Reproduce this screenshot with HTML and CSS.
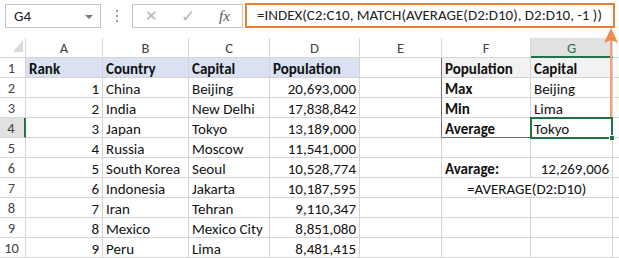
FILE: index.html
```html
<!DOCTYPE html>
<html>
<head>
<meta charset="utf-8">
<link rel="stylesheet" href="styles.css">
</head>
<body>
<div class="app">
  <div class="toolbar">
    <div class="namebox"><span>G4</span><span class="caret"></span></div>
    <div class="dots"><i></i><i></i><i></i></div>
    <div class="btns">
      <span class="btn x">✕</span>
      <span class="btn ok">✓</span>
      <span class="btn fx">fx</span>
    </div>
    <div class="formula">=INDEX(C2:C10, MATCH(AVERAGE(D2:D10), D2:D10, -1 ))</div>
  </div>
  <div class="sheet">
    <div class="ch corner"><span class="tri"></span></div>
    <div class="ch">A</div><div class="ch">B</div><div class="ch">C</div><div class="ch">D</div><div class="ch">E</div><div class="ch">F</div><div class="ch sel">G</div><div class="ch end"></div>

    <div class="rh">1</div>
    <div class="c blue b">Rank</div><div class="c blue b">Country</div><div class="c blue b">Capital</div><div class="c blue b">Population</div><div class="c tl"></div><div class="c gray b">Population</div><div class="c gray b">Capital</div><div class="c end"></div>

    <div class="rh">2</div>
    <div class="c r">1</div><div class="c">China</div><div class="c">Beijing</div><div class="c r">20,693,000</div><div class="c tl"></div><div class="c b">Max</div><div class="c">Beijing</div><div class="c end"></div>

    <div class="rh">3</div>
    <div class="c r">2</div><div class="c">India</div><div class="c">New Delhi</div><div class="c r">17,838,842</div><div class="c tl"></div><div class="c b">Min</div><div class="c">Lima</div><div class="c end"></div>

    <div class="rh selrow">4</div>
    <div class="c r">3</div><div class="c">Japan</div><div class="c">Tokyo</div><div class="c r">13,189,000</div><div class="c tl"></div><div class="c b tb">Average</div><div class="c active">Tokyo<span class="selbox"><span class="handle"></span></span></div><div class="c end"></div>

    <div class="rh">5</div>
    <div class="c r">4</div><div class="c">Russia</div><div class="c">Moscow</div><div class="c r">11,541,000</div><div class="c"></div><div class="c"></div><div class="c"></div><div class="c end"></div>

    <div class="rh">6</div>
    <div class="c r">5</div><div class="c">South Korea</div><div class="c">Seoul</div><div class="c r">10,528,774</div><div class="c"></div><div class="c b">Avarage:</div><div class="c r">12,269,006</div><div class="c end"></div>

    <div class="rh">7</div>
    <div class="c r">6</div><div class="c">Indonesia</div><div class="c">Jakarta</div><div class="c r">10,187,595</div><div class="c"></div><div class="c over">=AVERAGE(D2:D10)</div><div class="c"></div><div class="c end"></div>

    <div class="rh">8</div>
    <div class="c r">7</div><div class="c">Iran</div><div class="c">Tehran</div><div class="c r">9,110,347</div><div class="c"></div><div class="c"></div><div class="c"></div><div class="c end"></div>

    <div class="rh">9</div>
    <div class="c r">8</div><div class="c">Mexico</div><div class="c">Mexico City</div><div class="c r">8,851,080</div><div class="c"></div><div class="c"></div><div class="c"></div><div class="c end"></div>

    <div class="rh">10</div>
    <div class="c r">9</div><div class="c">Peru</div><div class="c">Lima</div><div class="c r">8,481,415</div><div class="c"></div><div class="c"></div><div class="c"></div><div class="c end"></div>
  </div>
  <svg class="arrow" width="20" height="95" viewBox="0 0 20 95">
    <line x1="11" y1="12" x2="11" y2="91" stroke="#F4A26F" stroke-width="2"/>
    <polygon points="11,2 4,17 11,14 18,17" fill="#F08A4B"/>
  </svg>
</div>
</body>
</html>
```
FILE: styles.css
```css
* { box-sizing: border-box; }
html, body { margin: 0; padding: 0; background: #fff; }
body { width: 619px; height: 258px; overflow: hidden; font-family: Carlito, Lato, "Liberation Sans", sans-serif; color: #000; }
.app { position: relative; width: 619px; height: 258px; }

.toolbar { height: 38px; display: flex; align-items: flex-start; padding: 3px 0 0 5px; }
.namebox { margin-top: 1px; width: 96px; height: 24px; border: 1px solid #c6c6c6; display: flex; align-items: center; justify-content: space-between; padding: 0 7px 0 8px; font-size: 15px; color: #222; }
.caret { width: 0; height: 0; border-left: 4px solid transparent; border-right: 4px solid transparent; border-top: 4px solid #777; margin-top: 1px; }
.dots { width: 31px; height: 24px; display: flex; flex-direction: column; align-items: center; justify-content: center; gap: 3px; margin-top: 1px; }
.dots i { display: block; width: 2px; height: 2px; background: #9a9a9a; }
.btns { margin-top: 1px; width: 111px; height: 24px; border: 1px solid #c6c6c6; display: flex; align-items: center; padding-left: 12px; }
.btn { font-size: 16px; color: #b5b5b5; }
.btn.x { width: 36px; font-size: 15px; }
.btn.ok { width: 36px; font-size: 17px; }
.btn.fx { font-family: "Liberation Serif", serif; font-style: italic; color: #555; font-size: 15px; margin-left: 2px; }
.formula { margin-left: 2px; width: 370px; height: 25px; border: 2px solid #ED7D31; padding: 0 0 0 10px; font-size: 15px; line-height: 21px; color: #222; white-space: nowrap; }

.sheet { display: grid; grid-template-columns: 26px 77px 86px 81px 90px 82px 89px 82px 6px; grid-template-rows: repeat(11, 20px); font-size: 15px; }
.ch { border-right: 1px solid #d6d6d6; border-bottom: 1px solid #d6d6d6; text-align: center; color: #444; font-size: 14.5px; line-height: 20px; }
.ch.corner { position: relative; }
.tri { position: absolute; right: 2px; bottom: 5px; width: 0; height: 0; border-left: 10px solid transparent; border-bottom: 12px solid #dadada; }
.ch.sel { background: #e1e1e1; color: #217346; border-bottom: 2px solid #217346; }
.ch.end, .c.end { border-right: none; }
.rh { border-right: 1px solid #d6d6d6; border-bottom: 1px solid #d6d6d6; text-align: center; color: #444; font-size: 14.5px; line-height: 21px; padding-right: 2px; }
.rh.selrow { background: #e1e1e1; border-right: 2px solid #217346; }
.c { border-right: 1px solid #d4d4d4; border-bottom: 1px solid #d4d4d4; padding: 1px 3px 0; line-height: 21px; white-space: nowrap; overflow: hidden; color: #111; }
.c.r { text-align: right; }
.c.b { font-weight: bold; }
.c.blue { background: #d9e1f2; }
.c.gray { background: #f2f2f2; }
.c.tl { border-right-color: #707070; }
.c.tb { border-bottom-color: #707070; }
.c.over { overflow: visible; border-right: none; padding-left: 25px; }
.c.active { position: relative; overflow: visible; }
.selbox { position: absolute; left: -1px; top: -1px; right: -1px; bottom: -2px; border: 2px solid #217346; }
.handle { position: absolute; right: -4px; bottom: -4px; width: 6px; height: 6px; background: #217346; border: 1px solid #fff; }
.arrow { position: absolute; left: 600px; top: 26px; }
```
